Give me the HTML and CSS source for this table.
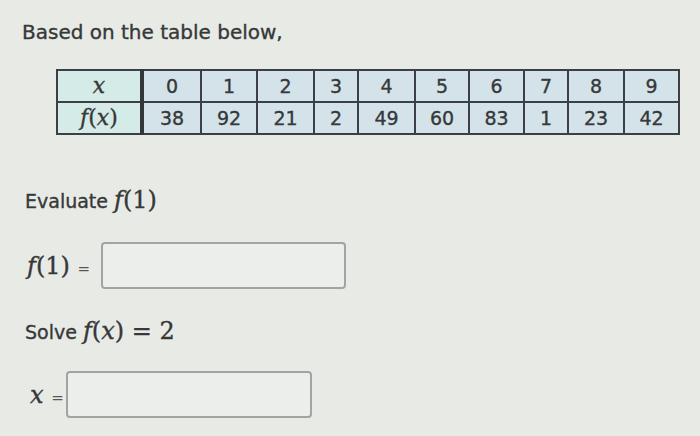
FILE: index.html
```html
<!DOCTYPE html>
<html>
<head>
<meta charset="utf-8">
<link rel="stylesheet" href="styles.css">
</head>
<body>
<div class="page">
  <p class="intro">Based on the table below,</p>
  <table class="tbl">
    <tr>
      <th class="lab"><span class="m">x</span></th>
      <td>0</td><td>1</td><td>2</td><td>3</td><td>4</td>
      <td>5</td><td>6</td><td>7</td><td>8</td><td>9</td>
    </tr>
    <tr>
      <th class="lab"><span class="m">f</span><span class="mr">(</span><span class="m">x</span><span class="mr">)</span></th>
      <td>38</td><td>92</td><td>21</td><td>2</td><td>49</td>
      <td>60</td><td>83</td><td>1</td><td>23</td><td>42</td>
    </tr>
  </table>
  <p class="q q1">Evaluate <span class="m">f</span><span class="mr">(1)</span></p>
  <div class="row r1">
    <span class="lbl"><span class="m">f</span><span class="mr">(1)</span> <span class="eq">=</span></span>
    <div class="box b1"></div>
  </div>
  <p class="q q2">Solve <span class="m">f</span><span class="mr">(</span><span class="m">x</span><span class="mr">) = 2</span></p>
  <div class="row r2">
    <span class="lbl"><span class="m">x</span> <span class="eq">=</span></span>
    <div class="box b2"></div>
  </div>
</div>
</body>
</html>
```

FILE: styles.css
```css
html, body {
  margin: 0;
  padding: 0;
  background: #e8ebe5;
}
body {
  width: 700px;
  height: 436px;
  overflow: hidden;
  font-family: "DejaVu Sans", Verdana, sans-serif;
  color: #363839;
  -webkit-text-stroke: 0.35px #363839;
}
.page {
  padding: 19px 0 0 22px;
}
.intro {
  margin: 0;
  font-size: 20px;
  line-height: 26px;
}
.m {
  font-family: "DejaVu Serif", "Liberation Serif", serif;
  font-style: italic;
}
.mr {
  font-family: "DejaVu Serif", "Liberation Serif", serif;
}
.tbl {
  margin: 24px 0 0 34px;
  border-collapse: collapse;
  font-size: 19px;
}
.tbl th, .tbl td {
  border: 2px solid #3c4044;
  height: 30px;
  padding: 0;
  text-align: center;
  background: #d4e3ea;
  font-weight: normal;
  line-height: 28px;
}
.tbl th.lab {
  width: 82px;
  background: #d5ebe7;
  border-right: 4px solid #33373a;
  font-size: 22px;
}
.tbl td:nth-child(2) { width: 56px; }
.tbl td:nth-child(3) { width: 54px; }
.tbl td:nth-child(4) { width: 55px; }
.tbl td:nth-child(5) { width: 42px; }
.tbl td:nth-child(6) { width: 55px; }
.tbl td:nth-child(7) { width: 52px; }
.tbl td:nth-child(8) { width: 53px; }
.tbl td:nth-child(9) { width: 42px; }
.tbl td:nth-child(10) { width: 54px; }
.tbl td:nth-child(11) { width: 53px; }
.q {
  margin: 0;
  font-size: 19px;
  line-height: 28px;
  padding-left: 3px;
}
.q .m, .q .mr { font-size: 24px; }
.q1 { margin-top: 51px; }
.row {
  display: flex;
  align-items: center;
}
.r1 { margin-top: 27px; padding-left: 5px; }
.r2 { margin-top: 25px; padding-left: 8px; }
.lbl { font-size: 24px; white-space: pre; }
.lbl .eq { font-family: "DejaVu Sans", sans-serif; font-size: 15px; color: #555; -webkit-text-stroke: 0; }
.r1 .lbl { width: 74px; }
.r2 .lbl { width: 36px; }
.box {
  height: 43px;
  border: 2px solid #a1a4a3;
  border-radius: 4px;
  background: #ebeeea;
}
.b1 { width: 241px; }
.b2 { width: 242px; }
.q2 { margin-top: 28px; }
```
